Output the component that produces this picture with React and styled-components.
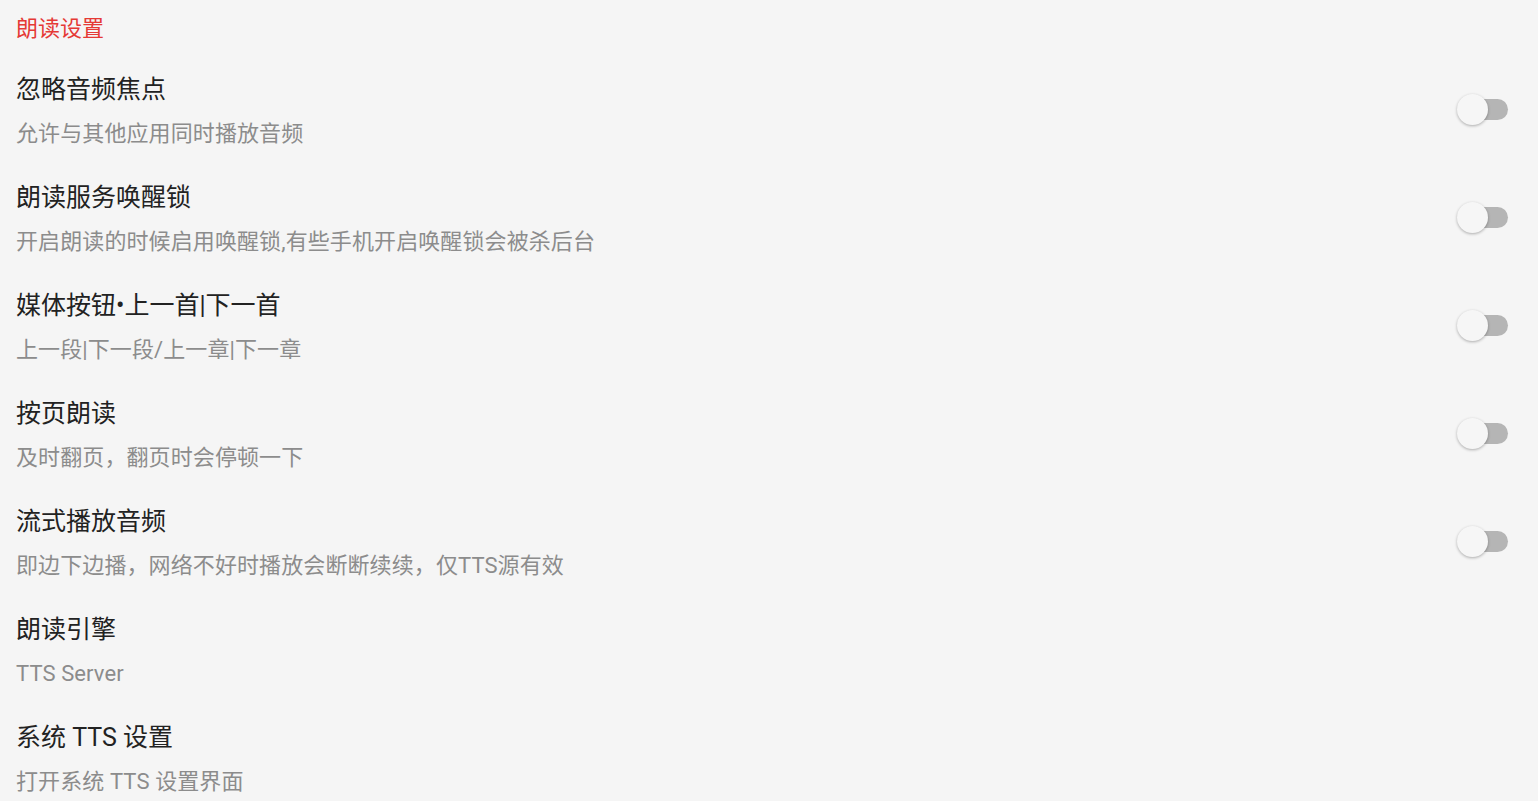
import React, { useState } from "react";
import styled, { createGlobalStyle } from "styled-components";

const GlobalStyle = createGlobalStyle`
  html, body {
    margin: 0;
    padding: 0;
    background: #f5f5f5;
  }
  body {
    font-family: Roboto, "Noto Sans CJK SC", sans-serif;
    -webkit-font-smoothing: antialiased;
  }
`;

const items = [
  { title: "忽略音频焦点", summary: "允许与其他应用同时播放音频", toggle: true },
  {
    title: "朗读服务唤醒锁",
    summary: "开启朗读的时候启用唤醒锁,有些手机开启唤醒锁会被杀后台",
    toggle: true,
  },
  { title: "媒体按钮•上一首|下一首", summary: "上一段|下一段/上一章|下一章", toggle: true },
  { title: "按页朗读", summary: "及时翻页，翻页时会停顿一下", toggle: true },
  {
    title: "流式播放音频",
    summary: "即边下边播，网络不好时播放会断断续续，仅TTS源有效",
    toggle: true,
  },
  { title: "朗读引擎", summary: "TTS Server" },
  { title: "系统 TTS 设置", summary: "打开系统 TTS 设置界面" },
];

export default function App() {
  const [values, setValues] = useState(items.map(() => false));

  const flip = (i) => {
    setValues(values.map((v, j) => (j === i ? !v : v)));
  };

  return (
    <Screen>
      <GlobalStyle />
      <Category>朗读设置</Category>
      {items.map((item, i) => (
        <Row key={item.title} onClick={() => item.toggle && flip(i)}>
          <Texts>
            <Title>{item.title}</Title>
            <Summary>{item.summary}</Summary>
          </Texts>
          {item.toggle && (
            <Switch>
              <Track $on={values[i]} />
              <Thumb $on={values[i]} />
            </Switch>
          )}
        </Row>
      ))}
    </Screen>
  );
}

const Screen = styled.div`
  width: 100vw;
  min-height: 100vh;
  background: #f5f5f5;
  overflow: hidden;
`;

const Category = styled.div`
  padding: 15px 16px 13px;
  font-size: 22px;
  line-height: 28px;
  color: #e53935;
`;

const Row = styled.div`
  display: flex;
  align-items: center;
  height: 108px;
  padding: 0 27px 0 16px;
  box-sizing: border-box;
  cursor: default;
`;

const Texts = styled.div`
  flex: 1;
  display: flex;
  flex-direction: column;
  gap: 14px;
  padding-top: 2px;
`;

const Title = styled.div`
  font-size: 25px;
  line-height: 32px;
  color: #222222;
`;

const Summary = styled.div`
  font-size: 22px;
  line-height: 28px;
  letter-spacing: 0.1px;
  color: #8c8c8c;
`;

const Switch = styled.div`
  position: relative;
  width: 54px;
  height: 32px;
`;

const Track = styled.div`
  position: absolute;
  left: 4px;
  right: 3px;
  top: 5px;
  height: 21px;
  border-radius: 11px;
  background: ${(p) => (p.$on ? "#f3a3a1" : "#b5b5b5")};
`;

const Thumb = styled.div`
  position: absolute;
  top: 0;
  left: ${(p) => (p.$on ? "22px" : "0")};
  width: 31px;
  height: 31px;
  border-radius: 50%;
  background: ${(p) => (p.$on ? "#e53935" : "#f6f6f6")};
  box-shadow: 0 1px 3px rgba(0, 0, 0, 0.3);
`;
